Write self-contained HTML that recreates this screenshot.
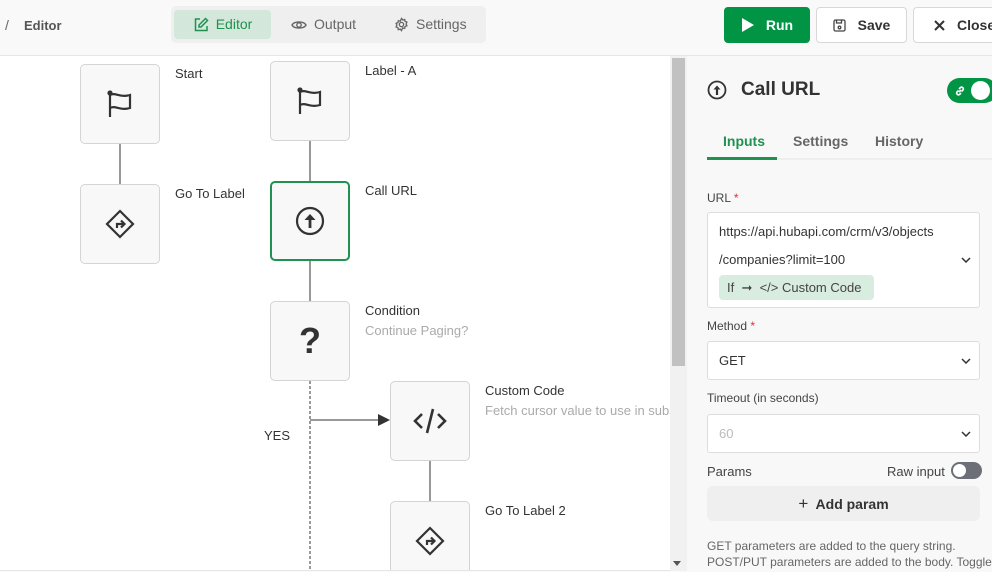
<!DOCTYPE html>
<html><head><meta charset="utf-8"><style>
*{box-sizing:border-box;margin:0;padding:0}
body{width:992px;height:572px;overflow:hidden;font-family:"Liberation Sans",sans-serif;background:#f9f9f9;position:relative;color:#333}
.abs{position:absolute}
.hdr{left:0;top:0;width:992px;height:56px;background:#f9f9f9;border-bottom:1px solid #e6e6e6}
.tabs{left:171px;top:6px;width:315px;height:37px;background:#efefef;border-radius:5px}
.tab{position:absolute;top:4px;height:29px;font-size:14px;line-height:29px;color:#666;display:flex;align-items:center;gap:7px}
.btn{position:absolute;top:7px;height:36px;border:1px solid #d8d8d8;border-radius:4px;background:#fff;font-size:14px;font-weight:bold;color:#333;display:flex;align-items:center;justify-content:center;gap:12px}
.canvas{left:0;top:56px;width:670px;height:515px;background:#fff;border-bottom:1px solid #e6e6e6;overflow:hidden}
.node{position:absolute;width:80px;height:80px;background:#f8f8f8;border:1px solid #d4d4d4;border-radius:5px;display:flex;align-items:center;justify-content:center}
.lbl{position:absolute;font-size:13px;color:#333;white-space:nowrap}
.sub{color:#aaa}
.panel{left:687px;top:56px;width:305px;height:516px;background:#f8f8f8}
.fl{position:absolute;font-size:12px;color:#444}
.inp{position:absolute;left:20px;width:273px;background:#fff;border:1px solid #ddd;border-radius:3px;font-size:13px}
.chev{position:absolute;right:8px}
</style></head><body>
<div class="abs hdr"></div>
<div class="abs" style="left:5px;top:17px;font-size:14px;color:#666">/</div>
<div class="abs" style="left:24px;top:18px;font-size:13px;font-weight:bold;color:#555">Editor</div>
<div class="abs tabs">
 <div class="tab" style="left:3px;width:97px;background:#d3e8da;border-radius:4px;color:#1f9150;justify-content:center">
  <svg width="16" height="16" viewBox="0 0 16 16" fill="none" stroke="#1f9150" stroke-width="1.5"><path d="M7 2H2.5v11.5H14V9"/><path d="M12.5 1.5l2 2L8 10H6V8z"/></svg>Editor</div>
 <div class="tab" style="left:120px">
  <svg width="16" height="14" viewBox="0 0 16 12" fill="none" stroke="#666" stroke-width="1.4"><path d="M1 6c2-4 12-4 14 0c-2 4-12 4-14 0z"/><circle cx="8" cy="6" r="2.2"/></svg>Output</div>
 <div class="tab" style="left:223px">
  <svg width="15" height="15" viewBox="0 0 16 16" fill="none" stroke="#666" stroke-width="1.4"><circle cx="8" cy="8" r="2.3"/><path d="M8 1.5l1.3 1.7 2.1-.6.4 2.1 2 .8-.9 1.9.9 1.9-2 .8-.4 2.1-2.1-.6L8 14.5l-1.3-1.6-2.1.6-.4-2.1-2-.8.9-1.9-.9-1.9 2-.8.4-2.1 2.1.6z"/></svg>Settings</div>
</div>
<div class="btn" style="left:724px;width:86px;background:#009444;border-color:#009444;color:#fff"><svg width="13" height="14" viewBox="0 0 13 14"><path d="M1 0v14l12-7z" fill="#fff"/></svg>Run</div>
<div class="btn" style="left:816px;width:91px"><svg width="13" height="13" viewBox="0 0 13 13" fill="none" stroke="#444" stroke-width="1.3"><rect x="1" y="1" width="11" height="11" rx="1.5"/><path d="M3.5 1v3h5V1"/><circle cx="6.5" cy="8.5" r="1.3"/></svg>Save</div>
<div class="btn" style="left:913px;width:90px;justify-content:flex-start;padding-left:20px"><svg width="11" height="11" viewBox="0 0 11 11" stroke="#333" stroke-width="2"><path d="M1 1l9 9M10 1l-9 9"/></svg>Close</div>

<div class="abs canvas">
 <svg class="abs" style="left:0;top:0" width="670" height="515">
  <line x1="120" y1="88" x2="120" y2="128" stroke="#333"/>
  <line x1="310" y1="85" x2="310" y2="125" stroke="#333"/>
  <line x1="310" y1="205" x2="310" y2="245" stroke="#333"/>
  <line x1="310" y1="325" x2="310" y2="515" stroke="#333" stroke-dasharray="3,2"/>
  <line x1="310" y1="364" x2="380" y2="364" stroke="#333"/>
  <path d="M378 358l12 6-12 6z" fill="#333"/>
  <line x1="430" y1="405" x2="430" y2="445" stroke="#333"/>
 </svg>
 <div class="node" style="left:80px;top:8px"><svg width="32" height="32" viewBox="0 0 32 32" fill="none" stroke="#333" stroke-width="2.2"><path d="M6 5v24"/><circle cx="6" cy="5" r="1.5" fill="#333"/><path d="M6 7c6-3 10 3 20 0v13c-10 3-14-3-20 0"/></svg></div>
 <div class="lbl" style="left:175px;top:10px">Start</div>
 <div class="node" style="left:80px;top:128px"><svg width="32" height="32" viewBox="0 0 32 32" fill="none" stroke="#333" stroke-width="2.2"><path d="M16 3l13 13-13 13L3 16z"/><path d="M13 20v-4h7M17 12.5l3.5 3.5-3.5 3.5"/></svg></div>
 <div class="lbl" style="left:175px;top:130px">Go To Label</div>
 <div class="node" style="left:270px;top:5px"><svg width="32" height="32" viewBox="0 0 32 32" fill="none" stroke="#333" stroke-width="2.2"><path d="M6 5v24"/><circle cx="6" cy="5" r="1.5" fill="#333"/><path d="M6 7c6-3 10 3 20 0v13c-10 3-14-3-20 0"/></svg></div>
 <div class="lbl" style="left:365px;top:7px">Label - A</div>
 <div class="node" style="left:270px;top:125px;border:2px solid #1f9150"><svg width="32" height="32" viewBox="0 0 32 32" fill="none" stroke="#333" stroke-width="2.2"><circle cx="16" cy="16" r="13"/><path d="M16 23V11" stroke-width="2.8"/><path d="M10.5 15l5.5-6 5.5 6z" fill="#333" stroke="none"/></svg></div>
 <div class="lbl" style="left:365px;top:127px">Call URL</div>
 <div class="node" style="left:270px;top:245px"><span style="font-size:36px;font-weight:bold;color:#333">?</span></div>
 <div class="lbl" style="left:365px;top:247px">Condition<br><span class="sub" style="line-height:26px">Continue Paging?</span></div>
 <div class="lbl" style="left:264px;top:372px">YES</div>
 <div class="node" style="left:390px;top:325px"><svg width="34" height="28" viewBox="0 0 34 28" fill="none" stroke="#333" stroke-width="2.6"><path d="M9 7l-7 7 7 7M25 7l7 7-7 7M20 2l-6 24"/></svg></div>
 <div class="lbl" style="left:485px;top:327px;width:185px;overflow:hidden">Custom Code<br><span class="sub" style="line-height:26px">Fetch cursor value to use in subsequent</span></div>
 <div class="node" style="left:390px;top:445px"><svg width="32" height="32" viewBox="0 0 32 32" fill="none" stroke="#333" stroke-width="2.2"><path d="M16 3l13 13-13 13L3 16z"/><path d="M13 20v-4h7M17 12.5l3.5 3.5-3.5 3.5"/></svg></div>
 <div class="lbl" style="left:485px;top:447px">Go To Label 2</div>
</div>
<div class="abs" style="left:670px;top:56px;width:17px;height:515px;background:#f1f1f1"></div>
<div class="abs" style="left:672px;top:58px;width:13px;height:308px;background:#c1c1c1"></div>
<div class="abs" style="left:673px;top:561px;width:0;height:0;border:4px solid transparent;border-top:5px solid #555"></div>

<div class="abs panel">
 <svg class="abs" style="left:20px;top:24px" width="20" height="20" viewBox="0 0 20 20" fill="none" stroke="#333" stroke-width="1.8"><circle cx="10" cy="10" r="8.5"/><path d="M10 15V8" stroke-width="2.2"/><path d="M6.5 9.5L10 5.5l3.5 4z" fill="#333" stroke="none"/></svg>
 <div class="abs" style="left:54px;top:23px;font-size:19px;font-weight:bold;color:#333">Call URL</div>
 <div class="abs" style="left:260px;top:22px;width:50px;height:25px;background:#009444;border-radius:13px">
  <svg style="position:absolute;left:7px;top:7px" width="12" height="12" viewBox="0 0 12 12" fill="none" stroke="#fff" stroke-width="1.6"><path d="M5 7l2-2M4.5 5.5L3 7a1.8 1.8 0 0 0 2.5 2.5L7 8M7.5 6.5L9 5A1.8 1.8 0 0 0 6.5 2.5L5 4"/></svg>
  <div style="position:absolute;left:24px;top:3px;width:19px;height:19px;background:#fff;border-radius:50%"></div></div>
 <div class="abs" style="left:36px;top:77px;font-size:14px;font-weight:bold;color:#1f9150">Inputs</div>
 <div class="abs" style="left:106px;top:77px;font-size:14px;font-weight:bold;color:#666">Settings</div>
 <div class="abs" style="left:188px;top:77px;font-size:14px;font-weight:bold;color:#666">History</div>
 <div class="abs" style="left:20px;top:102px;width:285px;height:2px;background:#eee"></div>
 <div class="abs" style="left:20px;top:101px;width:70px;height:3px;background:#1f9150"></div>
 <div class="fl" style="left:20px;top:135px">URL <span style="color:#d33">*</span></div>
 <div class="inp" style="top:156px;height:96px">
  <div style="position:absolute;left:11px;top:11px;color:#333">https://api.hubapi.com/crm/v3/objects</div>
  <div style="position:absolute;left:11px;top:39px;color:#333">/companies?limit=100</div>
  <svg class="chev" style="top:44px" width="10" height="6" viewBox="0 0 10 6" fill="none" stroke="#333" stroke-width="1.5"><path d="M1 1l4 4 4-4"/></svg>
  <div style="position:absolute;left:11px;top:62px;width:155px;height:25px;background:#d8ece0;border-radius:4px;font-size:13px;line-height:25px;padding-left:8px;color:#444">If &nbsp;➞ &nbsp;&lt;/&gt; Custom Code</div>
 </div>
 <div class="fl" style="left:20px;top:263px">Method <span style="color:#d33">*</span></div>
 <div class="inp" style="top:285px;height:39px;line-height:37px;padding-left:11px">GET<svg class="chev" style="top:16px" width="10" height="6" viewBox="0 0 10 6" fill="none" stroke="#333" stroke-width="1.5"><path d="M1 1l4 4 4-4"/></svg></div>
 <div class="fl" style="left:20px;top:335px">Timeout (in seconds)</div>
 <div class="inp" style="top:358px;height:39px;line-height:37px;padding-left:11px;color:#bbb">60<svg class="chev" style="top:16px" width="10" height="6" viewBox="0 0 10 6" fill="none" stroke="#333" stroke-width="1.5"><path d="M1 1l4 4 4-4"/></svg></div>
 <div class="fl" style="left:20px;top:408px;font-size:13px">Params</div>
 <div class="fl" style="left:200px;top:408px;font-size:13px">Raw input</div>
 <div class="abs" style="left:264px;top:406px;width:31px;height:17px;background:#6c6f78;border-radius:9px"><div style="position:absolute;left:2px;top:2px;width:13px;height:13px;background:#fff;border-radius:50%"></div></div>
 <div class="abs" style="left:20px;top:430px;width:273px;height:35px;background:#efefef;border-radius:6px;text-align:center;line-height:35px;font-size:14px;font-weight:bold;color:#333"><span style="font-weight:normal;font-size:17px">+</span>&nbsp; Add param</div>
 <div class="fl" style="left:20px;top:482px;line-height:16px;color:#666">GET parameters are added to the query string.<br>POST/PUT parameters are added to the body. Toggle</div>
</div>
</body></html>
